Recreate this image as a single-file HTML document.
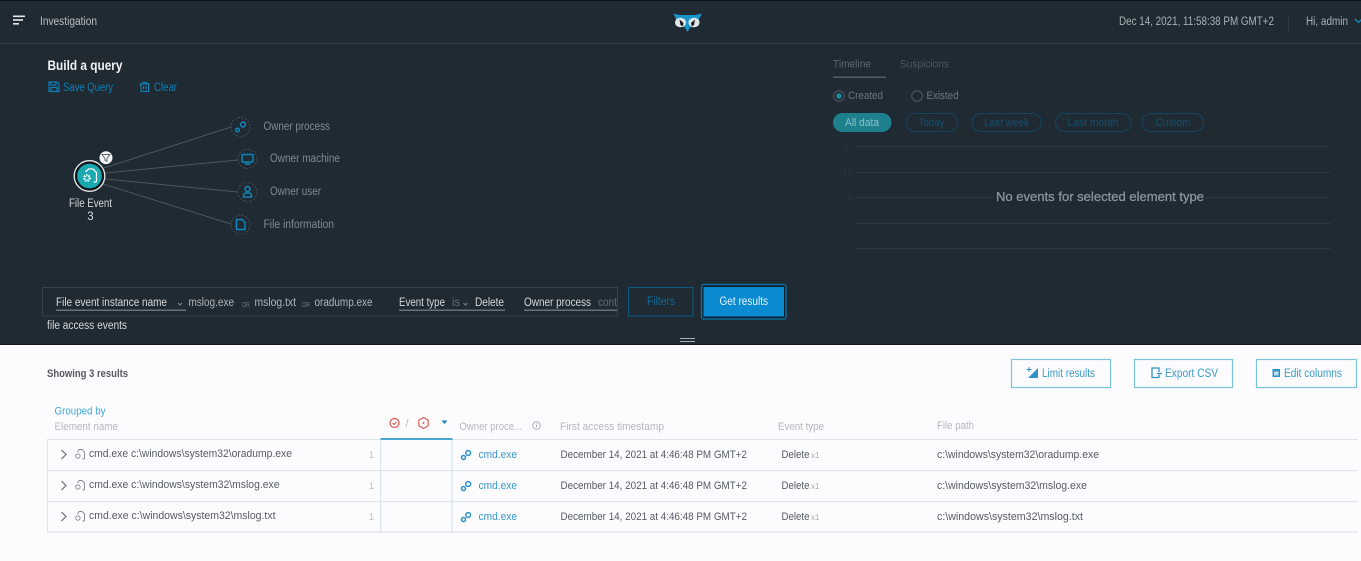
<!DOCTYPE html>
<html><head><meta charset="utf-8"><title>Investigation</title>
<style>
html,body{margin:0;padding:0;background:#fcfcfe;width:1361px;height:561px;overflow:hidden}
svg{display:block;font-family:"Liberation Sans",sans-serif;filter:blur(.35px)}
text{white-space:pre}
.gr{fill:#7f8a92;font-size:11.5px}
.w{fill:#d5d9dc;font-size:11.5px}
.tb{fill:#555b61;font-size:11px}
.ln{fill:#3497c9;font-size:11px}
.hd{fill:#b4b8bd;font-size:11px}
.pl{fill:#14506f;font-size:11px;text-anchor:middle}
.btn{fill:#3a9cc8;font-size:11.5px}
.or{fill:#6d7880;font-size:7px}
</style></head><body>
<svg width="1361" height="561" viewBox="0 0 1361 561" xmlns="http://www.w3.org/2000/svg">
<defs>
<g id="lk" fill="none" stroke="#2f93c6" stroke-width="1.5"><circle cx="3" cy="7.5" r="2"/><circle cx="7.7" cy="3" r="2.4"/></g>
<g id="fi" fill="none" stroke="#80868b" stroke-width=".9"><path d="M4.500 0.500h3l2.500 2.500v6a1 1 0 0 1-1 1H8M4.500 .5L3 3"/><circle cx="3.400" cy="7" r="2.200"/></g>
</defs>

<!-- dark panel -->
<rect width="1361" height="345" fill="#1f2a33"/>
<rect width="1361" height="1" fill="#0d1317"/>
<rect y="43" width="1361" height="1" fill="#36434b"/>
<rect y="344" width="1361" height="1" fill="#11181d"/>

<!-- header -->
<g fill="#e6e8ea"><rect x="13" y="15.500" width="12" height="1.600"/><rect x="13" y="19.200" width="10" height="1.600"/><rect x="13" y="23" width="6" height="1.600"/></g>
<text x="40" y="25" textLength="57" lengthAdjust="spacingAndGlyphs" fill="#b9c0c5" font-size="11.500">Investigation</text>
<path d="M673.500 13.500l5.500 1.500h16.500l6.500-1.500-3 5.500v6l-9 2.500-2.500 4.500-2.500-4.500-9-2.500v-6z" fill="#1895cb"/>
<ellipse cx="680.500" cy="22.500" rx="5.500" ry="4.800" fill="#dfe6ea"/><ellipse cx="694" cy="22.500" rx="5.500" ry="4.800" fill="#dfe6ea"/>
<path d="M679.500 19.500l4 3.500-.8 3.300-2.200-1.300zM695 19.500l-4 3.500 .8 3.300 2.200-1.300z" fill="#11171b"/>
<text x="1119" y="25" textLength="155" lengthAdjust="spacingAndGlyphs" fill="#aab2b8" font-size="11.500">Dec 14, 2021, 11:58:38 PM GMT+2</text>
<rect x="1288" y="14" width="1" height="18" fill="#2b3840"/>
<text x="1306" y="25" textLength="42" lengthAdjust="spacingAndGlyphs" fill="#aab2b8" font-size="11.500">Hi, admin</text>
<path d="M1355 19l3.500 3.500 3.500-3.500" fill="none" stroke="#1488c0" stroke-width="1.300"/>

<!-- build a query -->
<text x="47.500" y="70" textLength="75" lengthAdjust="spacingAndGlyphs" fill="#f1f3f4" font-size="13.500" font-weight="bold">Build a query</text>
<g fill="none" stroke="#0d7fb5" stroke-width="1.200">
<path d="M49 82h8l2 2v7.500h-10z"/><path d="M51 82v3h5v-3M51 91.500v-4h6v4"/>
<path d="M139.500 84h10.500M143 84v-1.500h3.500v1.500M141 84v7.500h7.500v-7.500M143.500 86v3.500M146 86v3.500"/>
</g>
<text x="63" y="91" textLength="50" lengthAdjust="spacingAndGlyphs" fill="#0d7fb5" font-size="11.500">Save Query</text>
<text x="154" y="91" textLength="23" lengthAdjust="spacingAndGlyphs" fill="#0d7fb5" font-size="11.500">Clear</text>

<!-- graph -->
<g stroke="#4c565d" stroke-width="1" fill="none">
<path d="M104 168L231 127"/><path d="M105 173L238 160"/><path d="M105 179L238 192"/><path d="M103 184L231 224"/>
</g>
<g fill="#1f2a33" stroke="#4a565e" stroke-width=".8" stroke-dasharray="2 1.500">
<circle cx="240.500" cy="127" r="9.500"/><circle cx="247.500" cy="159" r="9.500"/><circle cx="247.500" cy="192" r="9.500"/><circle cx="240.500" cy="224.500" r="9.500"/>
</g>
<g fill="none" stroke="#0f86bd" stroke-width="1.500">
<circle cx="237.500" cy="130" r="1.800"/><circle cx="243" cy="124.500" r="2.400"/>
<rect x="242" y="154.500" width="11" height="7.500" rx="1"/><path d="M244.500 164h6"/>
<circle cx="247.500" cy="189" r="2.500"/><path d="M243.500 197v-1.500a2.500 2.500 0 0 1 2.500-2.500h3a2.500 2.500 0 0 1 2.500 2.500v1.500z"/>
<path d="M236.500 219.500h5.500l3 3v7h-8.500z"/>
</g>
<circle cx="89.500" cy="176" r="15.300" fill="#12191e" stroke="#e8ecee" stroke-width="1.300"/>
<circle cx="89.500" cy="176" r="12.300" fill="#1ba9b1"/>
<g fill="none" stroke="#f2fafa" stroke-width="1.300">
<path d="M85.500 172l3-3h4.500l3.500 3.500v8.500a1 1 0 0 1-1 1h-2"/>
</g>
<circle cx="87" cy="178" r="2.700" fill="none" stroke="#f2fafa" stroke-width="2.300" stroke-dasharray="1.500 .8"/>
<circle cx="106" cy="157.700" r="6.500" fill="#f4f5f6"/>
<path d="M102 154.500h8l-3 4v3l-2-1v-2z" fill="none" stroke="#5a5f64" stroke-width=".9"/>
<text x="69" y="207" textLength="43" lengthAdjust="spacingAndGlyphs" class="w">File Event</text>
<text x="90.500" y="220" text-anchor="middle" class="w">3</text>
<text x="263.500" y="130" textLength="66.500" lengthAdjust="spacingAndGlyphs" class="gr">Owner process</text>
<text x="270" y="162" textLength="70" lengthAdjust="spacingAndGlyphs" class="gr">Owner machine</text>
<text x="270" y="195" textLength="51" lengthAdjust="spacingAndGlyphs" class="gr">Owner user</text>
<text x="263.500" y="228" textLength="70.500" lengthAdjust="spacingAndGlyphs" class="gr">File information</text>

<!-- right chart -->
<text x="833" y="67.500" textLength="38" lengthAdjust="spacingAndGlyphs" fill="#5b666e" font-size="11">Timeline</text>
<text x="900" y="67.500" textLength="49" lengthAdjust="spacingAndGlyphs" fill="#4d5860" font-size="11">Suspicions</text>
<rect x="833" y="76.500" width="53" height="1.500" fill="#515c63"/>
<circle cx="839" cy="96" r="5.300" fill="none" stroke="#4f5a61"/><circle cx="839" cy="96" r="2.800" fill="#1c8a98"/>
<text x="848" y="99" textLength="35" lengthAdjust="spacingAndGlyphs" fill="#6c777e" font-size="11">Created</text>
<circle cx="917" cy="96" r="5.300" fill="none" stroke="#4f5a61"/>
<text x="926.500" y="99" textLength="32" lengthAdjust="spacingAndGlyphs" fill="#6c777e" font-size="11">Existed</text>
<rect x="833" y="113" width="58.500" height="19" rx="9.500" fill="#1f808d"/>
<text x="862" y="126" text-anchor="middle" textLength="34" lengthAdjust="spacingAndGlyphs" fill="#8ec3ca" font-size="11">All data</text>
<g fill="none" stroke="#15465f">
<rect x="906" y="113.500" width="51.500" height="18" rx="9"/><rect x="972" y="113.500" width="69" height="18" rx="9"/><rect x="1055.500" y="113.500" width="75.500" height="18" rx="9"/><rect x="1142" y="113.500" width="61.500" height="18" rx="9"/>
</g>
<text x="931.500" y="126" textLength="26" lengthAdjust="spacingAndGlyphs" class="pl">Today</text>
<text x="1006.500" y="126" textLength="45" lengthAdjust="spacingAndGlyphs" class="pl">Last week</text>
<text x="1093" y="126" textLength="51" lengthAdjust="spacingAndGlyphs" class="pl">Last month</text>
<text x="1173" y="126" textLength="35" lengthAdjust="spacingAndGlyphs" class="pl">Custom</text>
<g fill="#2d3941">
<rect x="856" y="146" width="475" height="1"/><rect x="856" y="172" width="475" height="1"/><rect x="856" y="197" width="475" height="1"/><rect x="856" y="223" width="475" height="1"/><rect x="856" y="248" width="475" height="1"/>
</g>
<g fill="#2a353d" font-size="8"><text x="844" y="150">0</text><text x="843" y="176">10</text><text x="843" y="202">20</text><text x="843" y="227">30</text></g>
<rect x="994" y="190" width="212" height="14" fill="#1f2a33"/>
<text x="996" y="201" textLength="208" lengthAdjust="spacingAndGlyphs" fill="#8a959d" font-size="13" stroke="#8a959d" stroke-width=".3">No events for selected element type</text>

<!-- query bar -->
<rect x="42.500" y="287.500" width="575" height="28.500" fill="none" stroke="#36434c"/>
<g fill="#66727b"><rect x="56" y="309.500" width="130" height="1.500"/><rect x="399" y="309.500" width="106" height="1.500"/><rect x="524" y="309.500" width="93" height="1.500"/></g>
<text x="56" y="306" textLength="111" lengthAdjust="spacingAndGlyphs" class="w">File event instance name</text>
<path d="M178 303l2 2 2-2M463.500 303l2 2 2-2" fill="none" stroke="#7d8890"/>
<text x="188.500" y="306" textLength="45.500" lengthAdjust="spacingAndGlyphs" fill="#aeb5ba" font-size="11.500">mslog.exe</text>
<text x="242" y="307" textLength="8" lengthAdjust="spacingAndGlyphs" class="or">OR</text>
<text x="254.500" y="306" textLength="41.500" lengthAdjust="spacingAndGlyphs" fill="#aeb5ba" font-size="11.500">mslog.txt</text>
<text x="302" y="307" textLength="8" lengthAdjust="spacingAndGlyphs" class="or">OR</text>
<text x="314.500" y="306" textLength="58" lengthAdjust="spacingAndGlyphs" fill="#aeb5ba" font-size="11.500">oradump.exe</text>
<text x="399" y="306" textLength="46" lengthAdjust="spacingAndGlyphs" class="w">Event type</text>
<text x="452" y="306" fill="#616c74" font-size="11.500">is</text>
<text x="475" y="306" textLength="29" lengthAdjust="spacingAndGlyphs" class="w">Delete</text>
<text x="524" y="306" textLength="67" lengthAdjust="spacingAndGlyphs" class="w">Owner process</text>
<text x="598" y="306" textLength="19" lengthAdjust="spacingAndGlyphs" fill="#616c74" font-size="11.500">cont</text>
<rect x="628.500" y="287.500" width="64.500" height="28.500" fill="none" stroke="#0e577c" stroke-width="1.200"/>
<text x="647" y="305" textLength="28" lengthAdjust="spacingAndGlyphs" fill="#0e6a99" font-size="11.500">Filters</text>
<rect x="701.500" y="284.500" width="84.500" height="34.500" rx="2" fill="#10222f" stroke="#0d6e9f" stroke-width="1.400"/>
<rect x="703.500" y="287" width="80.500" height="29.500" fill="#0a8ad0"/>
<text x="719.500" y="305" textLength="48.500" lengthAdjust="spacingAndGlyphs" fill="#e7f3fa" font-size="11.500">Get results</text>
<text x="47" y="329" textLength="80" lengthAdjust="spacingAndGlyphs" class="w">file access events</text>
<rect x="680" y="338" width="15" height="1" fill="#a9afb3"/><rect x="680" y="341" width="15" height="1" fill="#a9afb3"/>

<!-- results -->
<rect y="345" width="1361" height="216" fill="#fcfcfe"/>
<text x="47" y="377" textLength="81" lengthAdjust="spacingAndGlyphs" fill="#55595e" font-size="11" font-weight="bold">Showing 3 results</text>
<g fill="none" stroke="#7cc2da" stroke-width="1.200">
<rect x="1011.500" y="359.500" width="99" height="28"/><rect x="1134.500" y="359.500" width="98" height="28"/><rect x="1256.500" y="359.500" width="100" height="28"/>
</g>
<path d="M1028 378h10v-10z" fill="#2f93c6"/><path d="M1026.500 369.500h5M1029 367v5" stroke="#2f93c6" fill="none"/>
<path d="M1159 372v-4h-7v9.500h7v-3M1157 373.500h5" fill="none" stroke="#2f93c6" stroke-width="1.300"/>
<rect x="1272.500" y="369" width="7.500" height="8" fill="#2f93c6"/><path d="M1274 371.500h4.500v4h-4.500z" fill="#bfe0ee"/>
<text x="1042" y="377" textLength="53" lengthAdjust="spacingAndGlyphs" class="btn">Limit results</text>
<text x="1165" y="377" textLength="53" lengthAdjust="spacingAndGlyphs" class="btn">Export CSV</text>
<text x="1284" y="377" textLength="58" lengthAdjust="spacingAndGlyphs" class="btn">Edit columns</text>

<!-- table head -->
<text x="54.500" y="414.500" textLength="51" lengthAdjust="spacingAndGlyphs" fill="#3fa6d4" font-size="11">Grouped by</text>
<text x="54.500" y="430" textLength="63.500" lengthAdjust="spacingAndGlyphs" class="hd">Element name</text>
<circle cx="394.500" cy="423" r="4.500" fill="none" stroke="#d9534f" stroke-width="1.200"/><path d="M392.500 423l1.500 1.500 2.500-2.500" fill="none" stroke="#d9534f"/>
<text x="405.500" y="427" fill="#b4b8bd" font-size="11">/</text>
<path d="M423.500 417.500l4.700 2.700v5.600l-4.700 2.700-4.700-2.700v-5.600z" fill="none" stroke="#d9534f" stroke-width="1.100"/><circle cx="423.500" cy="423" r="1" fill="#d9534f"/>
<path d="M441.500 420.500h6l-3 3.500z" fill="#1b82b8"/>
<text x="459.500" y="430" textLength="62.500" lengthAdjust="spacingAndGlyphs" class="hd">Owner proce...</text>
<circle cx="536.500" cy="425.500" r="3.800" fill="none" stroke="#a5a9ae" stroke-width=".9"/><path d="M536.500 424.500v3M536.500 423v.8" stroke="#a5a9ae" stroke-width=".9"/>
<text x="560" y="430" textLength="104" lengthAdjust="spacingAndGlyphs" class="hd">First access timestamp</text>
<text x="778" y="430" textLength="46" lengthAdjust="spacingAndGlyphs" class="hd">Event type</text>
<text x="937" y="429" textLength="37" lengthAdjust="spacingAndGlyphs" class="hd">File path</text>

<!-- table grid -->
<g fill="#dbe5ea">
<rect x="47" y="439" width="1311" height="1.200"/><rect x="47" y="470" width="1311" height="1.200"/><rect x="47" y="501" width="1311" height="1.200"/><rect x="47" y="531.500" width="1311" height="1.200"/>
<rect x="47" y="439" width="1" height="93"/><rect x="380" y="439" width="1.200" height="93"/><rect x="451.500" y="439" width="1.200" height="93"/>
</g>
<rect x="380.500" y="438" width="72" height="2" fill="#4aa8cc"/>

<!-- rows -->
<g fill="none" stroke="#777d83" stroke-width="1.300">
<path d="M61.500 450l4.500 4.500-4.500 4.500"/><path d="M61.500 481l4.500 4.500-4.500 4.500"/><path d="M61.500 512l4.500 4.500-4.500 4.500"/>
</g>
<use href="#fi" x="74.500" y="449"/><use href="#fi" x="74.500" y="480"/><use href="#fi" x="74.500" y="511"/>
<text x="89" y="457" textLength="203" lengthAdjust="spacingAndGlyphs" class="tb">cmd.exe c:\windows\system32\oradump.exe</text>
<text x="89" y="488" textLength="190.500" lengthAdjust="spacingAndGlyphs" class="tb">cmd.exe c:\windows\system32\mslog.exe</text>
<text x="89" y="519" textLength="186.500" lengthAdjust="spacingAndGlyphs" class="tb">cmd.exe c:\windows\system32\mslog.txt</text>
<g fill="#b8bbbf" font-size="9"><text x="369" y="458">1</text><text x="369" y="489">1</text><text x="369" y="520">1</text></g>
<use href="#lk" x="460.500" y="450"/><use href="#lk" x="460.500" y="481"/><use href="#lk" x="460.500" y="512"/>
<text x="478.500" y="458" textLength="38.500" lengthAdjust="spacingAndGlyphs" class="ln">cmd.exe</text>
<text x="478.500" y="489" textLength="38.500" lengthAdjust="spacingAndGlyphs" class="ln">cmd.exe</text>
<text x="478.500" y="520" textLength="38.500" lengthAdjust="spacingAndGlyphs" class="ln">cmd.exe</text>
<text x="560.500" y="458" textLength="186.500" lengthAdjust="spacingAndGlyphs" class="tb">December 14, 2021 at 4:46:48 PM GMT+2</text>
<text x="560.500" y="489" textLength="186.500" lengthAdjust="spacingAndGlyphs" class="tb">December 14, 2021 at 4:46:48 PM GMT+2</text>
<text x="560.500" y="520" textLength="186.500" lengthAdjust="spacingAndGlyphs" class="tb">December 14, 2021 at 4:46:48 PM GMT+2</text>
<text x="781.500" y="458" textLength="28" lengthAdjust="spacingAndGlyphs" class="tb">Delete</text>
<text x="781.500" y="489" textLength="28" lengthAdjust="spacingAndGlyphs" class="tb">Delete</text>
<text x="781.500" y="520" textLength="28" lengthAdjust="spacingAndGlyphs" class="tb">Delete</text>
<g fill="#a8acb1" font-size="8"><text x="811" y="458">x1</text><text x="811" y="489">x1</text><text x="811" y="520">x1</text></g>
<text x="937" y="458" textLength="162" lengthAdjust="spacingAndGlyphs" class="tb">c:\windows\system32\oradump.exe</text>
<text x="937" y="489" textLength="150" lengthAdjust="spacingAndGlyphs" class="tb">c:\windows\system32\mslog.exe</text>
<text x="937" y="520" textLength="146" lengthAdjust="spacingAndGlyphs" class="tb">c:\windows\system32\mslog.txt</text>
</svg>
</body></html>
